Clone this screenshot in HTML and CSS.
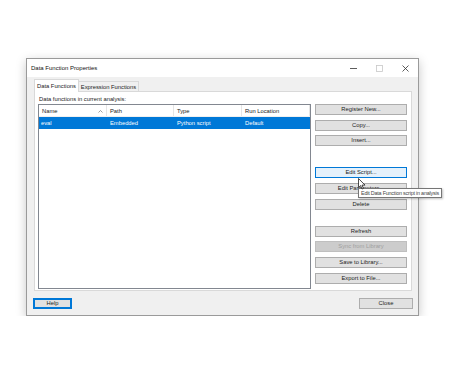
FILE: index.html
```html
<!DOCTYPE html>
<html>
<head>
<meta charset="utf-8">
<title>Data Function Properties</title>
<link rel="stylesheet" href="styles.css">
</head>
<body>
<div class="window">
  <div class="titlebar">
    <span class="title">Data Function Properties</span>
    <div class="controls">
      <span class="ctl min"><svg width="7" height="7" viewBox="0 0 7 7"><line x1="0" y1="3.5" x2="7" y2="3.5" stroke="#333" stroke-width="0.8"/></svg></span>
      <span class="ctl max"><svg width="7" height="7" viewBox="0 0 7 7"><rect x="0.5" y="0.5" width="6" height="6" fill="none" stroke="#c8c8c8" stroke-width="0.8"/></svg></span>
      <span class="ctl close"><svg width="7" height="7" viewBox="0 0 7 7"><path d="M0.5 0.5 L6.5 6.5 M6.5 0.5 L0.5 6.5" stroke="#333" stroke-width="0.8"/></svg></span>
    </div>
  </div>
  <div class="content">
    <div class="tabs">
      <div class="tab active">Data Functions</div>
      <div class="tab">Expression Functions</div>
    </div>
    <div class="panel">
      <div class="label">Data functions in current analysis:</div>
      <div class="list">
        <div class="row header">
          <div class="cell">Name<span class="sort"><svg width="5" height="3" viewBox="0 0 5 3"><path d="M0.5 2.5 L2.5 0.5 L4.5 2.5" fill="none" stroke="#777" stroke-width="0.7"/></svg></span></div>
          <div class="cell">Path</div>
          <div class="cell">Type</div>
          <div class="cell">Run Location</div>
        </div>
        <div class="row selected">
          <div class="cell">eval</div>
          <div class="cell">Embedded</div>
          <div class="cell">Python script</div>
          <div class="cell">Default</div>
        </div>
      </div>
      <div class="buttons">
        <button class="btn">Register New...</button>
        <button class="btn">Copy...</button>
        <button class="btn">Insert...</button>
        <div class="spacer big"></div>
        <button class="btn hover">Edit Script...</button>
        <button class="btn">Edit Parameters...</button>
        <button class="btn">Delete</button>
        <div class="spacer small"></div>
        <button class="btn">Refresh</button>
        <button class="btn disabled">Sync from Library</button>
        <button class="btn">Save to Library...</button>
        <button class="btn">Export to File...</button>
        <div class="tooltip">Edit Data Function script in analysis</div>
        <svg class="cursor" width="8" height="12" viewBox="0 0 8 12"><path d="M0.5 0.5 L0.5 9.5 L2.6 7.6 L4 11 L5.4 10.4 L4 7.1 L7 7.1 Z" fill="#fff" stroke="#000" stroke-width="0.7" stroke-linejoin="round"/></svg>
      </div>
    </div>
    <div class="footer">
      <button class="btn help">Help</button>
      <button class="btn closebtn">Close</button>
    </div>
  </div>
</div>
</body>
</html>
```

FILE: styles.css
```css
html, body {
  margin: 0;
  padding: 0;
  background: #ffffff;
}
body {
  font-family: "Liberation Sans", Arial, sans-serif;
  font-size: 5.8px;
  color: #222;
}
.window {
  margin: 58px 0 0 26px;
  width: 391px;
  height: 256px;
  border: 1px solid #9a9a9a;
  background: #f0f0f0;
  box-shadow: 0 3px 10px rgba(0, 0, 0, 0.22);
  display: flex;
  flex-direction: column;
}
.titlebar {
  height: 18px;
  background: #ffffff;
  display: flex;
  align-items: center;
  padding-left: 4px;
}
.title {
  flex: 1;
  font-size: 6px;
  color: #111;
}
.controls {
  display: flex;
  height: 18px;
}
.ctl {
  width: 26px;
  display: flex;
  align-items: center;
  justify-content: center;
}
.ctl svg { display: block; }
.content {
  flex: 1;
  display: flex;
  flex-direction: column;
  padding: 2px 6px 0 7px;
}
.tabs {
  display: flex;
  align-items: flex-end;
  height: 12px;
  position: relative;
  z-index: 1;
}
.tab {
  height: 10px;
  display: flex;
  align-items: center;
  justify-content: center;
  white-space: nowrap;
  border: 1px solid #d9d9d9;
  border-bottom: none;
  background: #f0f0f0;
  box-sizing: border-box;
}
.tab.active {
  height: 13px;
  margin-bottom: -1px;
  background: #ffffff;
  padding-bottom: 1px;
  width: 45px;
}
.tab + .tab {
  border-left: none;
  width: 60px;
}
.panel {
  height: 200px;
  box-sizing: border-box;
  border: 1px solid #d9d9d9;
  background: #ffffff;
  display: grid;
  grid-template-columns: 273px 92px;
  grid-template-rows: 12px 1fr;
  column-gap: 4px;
  padding: 0 3px 1px 3px;
}
.label {
  grid-column: 1 / 3;
  display: flex;
  align-items: center;
  padding-left: 1px;
  padding-top: 1px;
}
.list {
  border: 1px solid #828790;
  background: #ffffff;
}
.row {
  display: grid;
  grid-template-columns: 68px 67px 68px 68px;
  height: 11.5px;
}
.cell {
  display: flex;
  align-items: center;
  padding-left: 3px;
  white-space: nowrap;
  position: relative;
}
.header .cell {
  border-right: 1px solid #e5e5e5;
  padding-left: 3px;
}
.header {
  height: 11px;
  border-bottom: 1px solid #f0f0f0;
}
.sort {
  position: absolute;
  right: 3px;
  top: 5px;
  line-height: 0;
}
.selected {
  background: #0078d7;
  color: #ffffff;
}
.selected .cell:first-child { padding-left: 2px; }
.buttons {
  display: flex;
  flex-direction: column;
  position: relative;
}
.btn {
  font-family: "Liberation Sans", Arial, sans-serif;
  font-size: 5.8px;
  color: #222;
  height: 11px;
  margin: 0 0 4.7px 0;
  padding: 0;
  background: #e1e1e1;
  border: 1px solid #adadad;
  border-radius: 0;
  box-sizing: border-box;
  line-height: 9px;
  text-align: center;
  white-space: nowrap;
}
.btn.hover {
  background: #e5f1fb;
  border-color: #0078d7;
}
.btn.disabled {
  color: #a0a0a0;
  background: #cccccc;
  border-color: #bfbfbf;
}
.spacer.big { height: 16.3px; }
.spacer.small { height: 11.3px; }
.tooltip {
  position: absolute;
  left: 43px;
  top: 84px;
  height: 10px;
  box-sizing: border-box;
  background: #ffffff;
  border: 1px solid #767676;
  box-shadow: 1px 1px 2px rgba(0, 0, 0, 0.25);
  padding: 0 2px;
  line-height: 8px;
  white-space: nowrap;
  color: #444;
  font-size: 5.4px;
  letter-spacing: -0.2px;
}
.cursor {
  position: absolute;
  left: 43px;
  top: 74px;
}
.footer {
  flex: 1;
  display: flex;
  justify-content: space-between;
  align-items: flex-start;
  padding-top: 7px;
  margin-right: -1px;
}
.footer .btn { margin: 0; }
.help {
  width: 39px;
  margin-left: -1px !important;
  border: 1px solid #0078d7;
  box-shadow: inset 0 0 0 1px #0078d7;
  background: #e1e1e1;
}
.closebtn {
  width: 54px;
}
```
